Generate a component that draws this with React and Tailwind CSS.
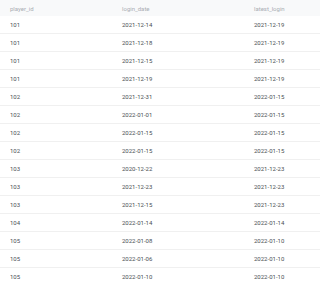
const rows = [
  ['101', '2021-12-14', '2021-12-19'],
  ['101', '2021-12-18', '2021-12-19'],
  ['101', '2021-12-15', '2021-12-19'],
  ['101', '2021-12-19', '2021-12-19'],
  ['102', '2021-12-31', '2022-01-15'],
  ['102', '2022-01-01', '2022-01-15'],
  ['102', '2022-01-15', '2022-01-15'],
  ['102', '2022-01-15', '2022-01-15'],
  ['103', '2020-12-22', '2021-12-23'],
  ['103', '2021-12-23', '2021-12-23'],
  ['103', '2021-12-15', '2021-12-23'],
  ['104', '2022-01-14', '2022-01-14'],
  ['105', '2022-01-08', '2022-01-10'],
  ['105', '2022-01-06', '2022-01-10'],
  ['105', '2022-01-10', '2022-01-10'],
];

const cols = 'grid grid-cols-[112px_132px_1fr] items-center';

export default function App() {
  return (
    <div className="w-[320px] h-[284px] overflow-hidden bg-white font-['Roboto',sans-serif] text-[6px]">
      {/* Header */}
      <div className={`${cols} h-[16px] bg-[#f8f9fa] text-[#a9adb3]`}>
        <div className="pl-[10px]">player_id</div>
        <div className="pl-[10px]">login_date</div>
        <div className="pl-[10px]">latest_login</div>
      </div>

      {/* Rows */}
      {rows.map((r, i) => (
        <div key={i} className={`${cols} h-[18px] border-b border-[#f0f0f0] text-[#4b4f55]`}>
          <div className="pl-[10px]">{r[0]}</div>
          <div className="pl-[10px]">{r[1]}</div>
          <div className="pl-[10px]">{r[2]}</div>
        </div>
      ))}
    </div>
  );
}
